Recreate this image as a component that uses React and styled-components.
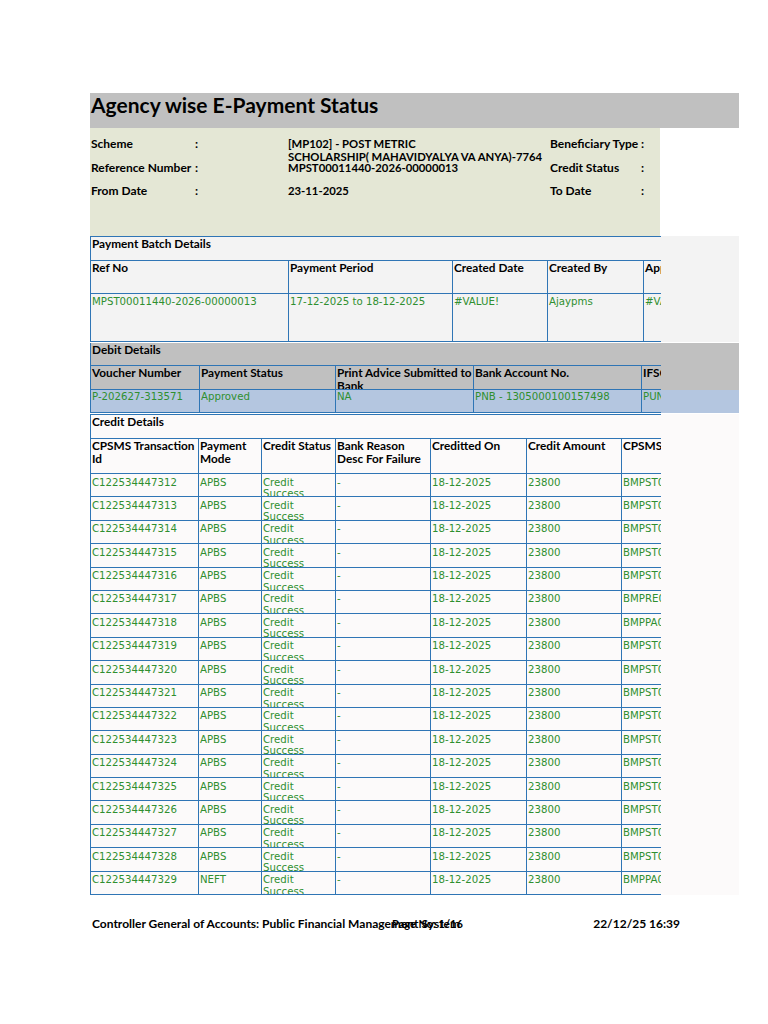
import React from "react";
import styled, { createGlobalStyle } from "styled-components";

const GlobalStyle = createGlobalStyle`
  html, body {
    margin: 0;
    padding: 0;
    background: #fff;
  }
  body {
    font-family: Lato, "Liberation Sans", sans-serif;
    color: #000;
  }
`;

const LINE = "#2f75b5";
const GREEN = "#2f8f2f";

const Page = styled.div`
  padding: 93px 0 0 90px;
  width: 649px;
`;

const TitleBand = styled.div`
  height: 35px;
  background: #c0c0c0;
  font-size: 21px;
  font-weight: 700;
  line-height: 24px;
  padding-left: 1px;
`;

const Info = styled.div`
  width: 570px;
  height: 99px;
  padding-top: 9px;
  background: #e4e7d5;
  display: grid;
  grid-template-columns: 105px 93px 262px 91px 19px;
  grid-auto-rows: 23.5px;
  font-size: 12px;
  font-weight: 700;
  line-height: 14px;
  align-content: start;
`;

const InfoCell = styled.div`
  padding-left: ${(p) => (p.$first ? "1px" : "0")};
  white-space: nowrap;
  font-size: ${(p) => (p.$value ? "11.3px" : "12px")};
  line-height: ${(p) => (p.$value ? "13px" : "14px")};
  position: relative;
  z-index: ${(p) => (p.$value ? 1 : 0)};
`;

const Band = styled.div`
  width: 649px;
  background: ${(p) => p.$bg};
  margin-top: ${(p) => p.$gap || 0}px;
`;

const Cells = styled.div`
  width: 570px;
  overflow: hidden;
  display: grid;
  grid-template-columns: ${(p) => p.$cols};
  grid-auto-rows: ${(p) => p.$h}px;
  border-left: 1px solid ${LINE};
  border-top: ${(p) => (p.$top ? `1px solid ${LINE}` : "none")};
`;

const Cell = styled.div`
  border-right: 1px solid ${LINE};
  border-bottom: 1px solid ${LINE};
  padding: ${(p) => p.$pt ?? 0}px 0 0 1px;
  overflow: hidden;
  white-space: ${(p) => (p.$wrap ? "normal" : "nowrap")};
  font-size: 11.8px;
  line-height: 13px;
  font-weight: 700;
  color: #000;
`;

const SectionTitle = styled(Cell)`
  grid-column: 1 / -1;
  border-right: none;
  padding-top: 0;
`;

const Data = styled(Cell)`
  font-family: "DejaVu Sans", sans-serif;
  font-weight: 400;
  font-size: 10.2px;
  line-height: 11.5px;
  color: ${GREEN};
  padding-top: ${(p) => p.$pt ?? 2.5}px;
`;

const Line = styled.span`
  display: block;
`;

const Footer = styled.div`
  position: relative;
  margin-top: 22px;
  display: flex;
  justify-content: space-between;
  width: 588px;
  padding-left: 2px;
  font-size: 12px;
  font-weight: 700;
  line-height: 14px;
`;

const PageNo = styled.span`
  position: absolute;
  left: 302px;
  top: 0;
  font-size: 11px;
`;

const batchCols = "198px 164px 95px 96px 120px";
const debitCols = "109px 136px 138px 168px 120px";
const creditCols = "108px 63px 74px 95px 96px 95px 120px";

const credits = [
  ["C122534447312", "APBS", "BMPST"],
  ["C122534447313", "APBS", "BMPST"],
  ["C122534447314", "APBS", "BMPST"],
  ["C122534447315", "APBS", "BMPST"],
  ["C122534447316", "APBS", "BMPST"],
  ["C122534447317", "APBS", "BMPRE"],
  ["C122534447318", "APBS", "BMPPA"],
  ["C122534447319", "APBS", "BMPST"],
  ["C122534447320", "APBS", "BMPST"],
  ["C122534447321", "APBS", "BMPST"],
  ["C122534447322", "APBS", "BMPST"],
  ["C122534447323", "APBS", "BMPST"],
  ["C122534447324", "APBS", "BMPST"],
  ["C122534447325", "APBS", "BMPST"],
  ["C122534447326", "APBS", "BMPST"],
  ["C122534447327", "APBS", "BMPST"],
  ["C122534447328", "APBS", "BMPST"],
  ["C122534447329", "NEFT", "BMPPA"],
];

export default function App() {
  return (
    <Page>
      <GlobalStyle />
      <TitleBand>Agency wise E-Payment Status</TitleBand>

      <Info>
        <InfoCell $first>Scheme</InfoCell>
        <InfoCell>:</InfoCell>
        <InfoCell $value>
          [MP102] - POST METRIC
          <br />
          SCHOLARSHIP( MAHAVIDYALYA VA ANYA)-7764
        </InfoCell>
        <InfoCell>Beneficiary Type</InfoCell>
        <InfoCell>:</InfoCell>

        <InfoCell $first>Reference Number</InfoCell>
        <InfoCell>:</InfoCell>
        <InfoCell $value>MPST00011440-2026-00000013</InfoCell>
        <InfoCell>Credit Status</InfoCell>
        <InfoCell>:</InfoCell>

        <InfoCell $first>From Date</InfoCell>
        <InfoCell>:</InfoCell>
        <InfoCell $value>23-11-2025</InfoCell>
        <InfoCell>To Date</InfoCell>
        <InfoCell>:</InfoCell>
      </Info>

      <Band $bg="#f3f3f3">
        <Cells $cols={batchCols} $h={24} $top>
          <SectionTitle>Payment Batch Details</SectionTitle>
        </Cells>
        <Cells $cols={batchCols} $h={33}>
          <Cell>Ref No</Cell>
          <Cell>Payment Period</Cell>
          <Cell>Created Date</Cell>
          <Cell>Created By</Cell>
          <Cell>Approved By</Cell>
        </Cells>
        <Cells $cols={batchCols} $h={48}>
          <Data $pt={2}>MPST00011440-2026-00000013</Data>
          <Data $pt={2}>17-12-2025 to 18-12-2025</Data>
          <Data $pt={2}>#VALUE!</Data>
          <Data $pt={2}>Ajaypms</Data>
          <Data $pt={2}>#VALUE!</Data>
        </Cells>
      </Band>

      <Band $bg="#c0c0c0" $gap={1}>
        <Cells $cols={debitCols} $h={23}>
          <SectionTitle>Debit Details</SectionTitle>
        </Cells>
        <Cells $cols={debitCols} $h={24}>
          <Cell>Voucher Number</Cell>
          <Cell>Payment Status</Cell>
          <Cell $wrap>Print Advice Submitted to Bank</Cell>
          <Cell>Bank Account No.</Cell>
          <Cell>IFSC Code</Cell>
        </Cells>
      </Band>
      <Band $bg="#b4c6e0">
        <Cells $cols={debitCols} $h={23}>
          <Data $pt={1}>P-202627-313571</Data>
          <Data $pt={1}>Approved</Data>
          <Data $pt={1}>NA</Data>
          <Data $pt={1}>PNB - 1305000100157498</Data>
          <Data $pt={1}>PUNB0130500</Data>
        </Cells>
      </Band>

      <Band $bg="#fcfafa" $gap={1}>
        <Cells $cols={creditCols} $h={24} $top>
          <SectionTitle>Credit Details</SectionTitle>
        </Cells>
        <Cells $cols={creditCols} $h={35}>
          <Cell $wrap>CPSMS Transaction Id</Cell>
          <Cell $wrap>Payment Mode</Cell>
          <Cell $wrap>Credit Status</Cell>
          <Cell $wrap>Bank Reason Desc For Failure</Cell>
          <Cell>Creditted On</Cell>
          <Cell>Credit Amount</Cell>
          <Cell>CPSMS Beneficiary</Cell>
        </Cells>
        <Cells $cols={creditCols} $h={23.4}>
          {credits.map(([id, mode, code]) => (
            <React.Fragment key={id}>
              <Data>{id}</Data>
              <Data>{mode}</Data>
              <Data>
                <Line>Credit</Line>
                <Line>Success</Line>
              </Data>
              <Data>-</Data>
              <Data>18-12-2025</Data>
              <Data>23800</Data>
              <Data>{code}0000</Data>
            </React.Fragment>
          ))}
        </Cells>
      </Band>

      <Footer>
        <span>Controller General of Accounts: Public Financial Management System</span>
        <PageNo>Page No: 1/16</PageNo>
        <span>22/12/25 16:39</span>
      </Footer>
    </Page>
  );
}
